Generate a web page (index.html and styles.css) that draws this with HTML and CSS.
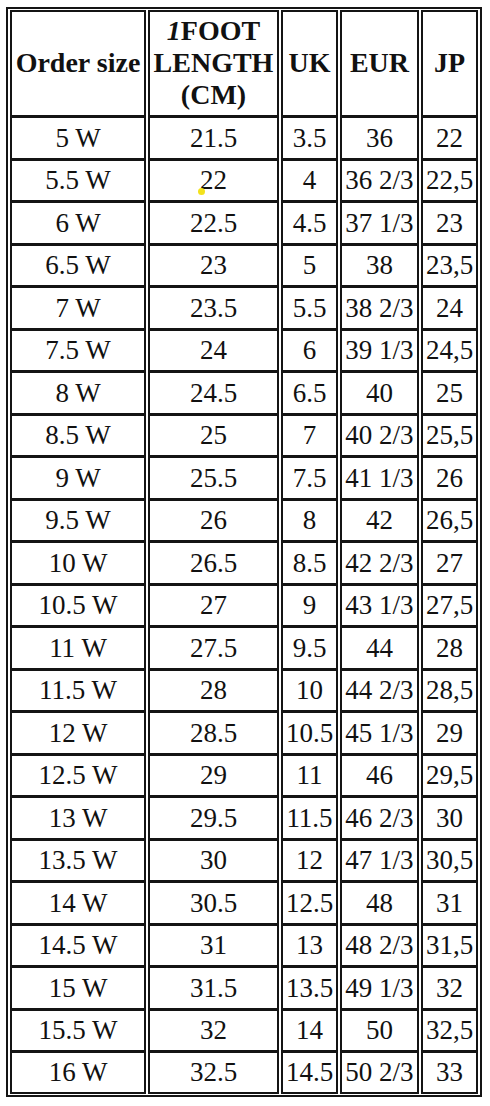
FILE: index.html
```html
<!DOCTYPE html>
<html>
<head>
<meta charset="utf-8">
<link rel="stylesheet" href="styles.css">
</head>
<body>
<div class="wrap">
<table class="sizes">
  <colgroup>
    <col class="c1"><col class="c2"><col class="c3"><col class="c4"><col class="c5">
  </colgroup>
  <thead>
    <tr class="head">
      <th>Order size</th>
      <th><i>1</i>FOOT<br>LENGTH<br>(CM)</th>
      <th>UK</th>
      <th>EUR</th>
      <th>JP</th>
    </tr>
  </thead>
  <tbody>
    <tr><td>5 W</td><td>21.5</td><td>3.5</td><td>36</td><td>22</td></tr>
    <tr><td>5.5 W</td><td>22</td><td>4</td><td>36 2/3</td><td>22,5</td></tr>
    <tr><td>6 W</td><td>22.5</td><td>4.5</td><td>37 1/3</td><td>23</td></tr>
    <tr><td>6.5 W</td><td>23</td><td>5</td><td>38</td><td>23,5</td></tr>
    <tr><td>7 W</td><td>23.5</td><td>5.5</td><td>38 2/3</td><td>24</td></tr>
    <tr><td>7.5 W</td><td>24</td><td>6</td><td>39 1/3</td><td>24,5</td></tr>
    <tr><td>8 W</td><td>24.5</td><td>6.5</td><td>40</td><td>25</td></tr>
    <tr><td>8.5 W</td><td>25</td><td>7</td><td>40 2/3</td><td>25,5</td></tr>
    <tr><td>9 W</td><td>25.5</td><td>7.5</td><td>41 1/3</td><td>26</td></tr>
    <tr><td>9.5 W</td><td>26</td><td>8</td><td>42</td><td>26,5</td></tr>
    <tr><td>10 W</td><td>26.5</td><td>8.5</td><td>42 2/3</td><td>27</td></tr>
    <tr><td>10.5 W</td><td>27</td><td>9</td><td>43 1/3</td><td>27,5</td></tr>
    <tr><td>11 W</td><td>27.5</td><td>9.5</td><td>44</td><td>28</td></tr>
    <tr><td>11.5 W</td><td>28</td><td>10</td><td>44 2/3</td><td>28,5</td></tr>
    <tr><td>12 W</td><td>28.5</td><td>10.5</td><td>45 1/3</td><td>29</td></tr>
    <tr><td>12.5 W</td><td>29</td><td>11</td><td>46</td><td>29,5</td></tr>
    <tr><td>13 W</td><td>29.5</td><td>11.5</td><td>46 2/3</td><td>30</td></tr>
    <tr><td>13.5 W</td><td>30</td><td>12</td><td>47 1/3</td><td>30,5</td></tr>
    <tr><td>14 W</td><td>30.5</td><td>12.5</td><td>48</td><td>31</td></tr>
    <tr><td>14.5 W</td><td>31</td><td>13</td><td>48 2/3</td><td>31,5</td></tr>
    <tr><td>15 W</td><td>31.5</td><td>13.5</td><td>49 1/3</td><td>32</td></tr>
    <tr><td>15.5 W</td><td>32</td><td>14</td><td>50</td><td>32,5</td></tr>
    <tr class="last"><td>16 W</td><td>32.5</td><td>14.5</td><td>50 2/3</td><td>33</td></tr>
  </tbody>
</table>
<span class="dot"></span>
</div>
</body>
</html>
```

FILE: styles.css
```css
html, body {
  margin: 0;
  padding: 0;
  background: #fff;
}

.wrap {
  position: relative;
  padding: 7px 0 0 6px;
}

.sizes {
  border-collapse: separate;
  border-spacing: 2px 0;
  border: 2px solid #141414;
  padding: 1px 0;
  table-layout: fixed;
  width: 476px;
  font-family: "Liberation Serif", "Times New Roman", serif;
  color: #111;
}

.c1 { width: 136px; }
.c2 { width: 131px; }
.c3 { width: 57px; }
.c4 { width: 79px; }
.c5 { width: 57px; }

.sizes th,
.sizes td {
  box-sizing: border-box;
  border-style: solid;
  border-color: #141414;
  border-width: 2px 2px 1px 2px;
  padding: 0;
  text-align: center;
  vertical-align: middle;
  white-space: nowrap;
}

.sizes th {
  height: 106px;
  font-size: 28px;
  line-height: 32px;
  font-weight: bold;
  padding-bottom: 2px;
}

.sizes td {
  height: 42.5px;
  font-size: 27px;
  line-height: 30px;
  font-weight: normal;
}

.sizes .last td {
  border-bottom-width: 2px;
}

.dot {
  position: absolute;
  left: 198px;
  top: 188px;
  width: 7px;
  height: 7px;
  border-radius: 50%;
  background: #f3e21c;
}
```
